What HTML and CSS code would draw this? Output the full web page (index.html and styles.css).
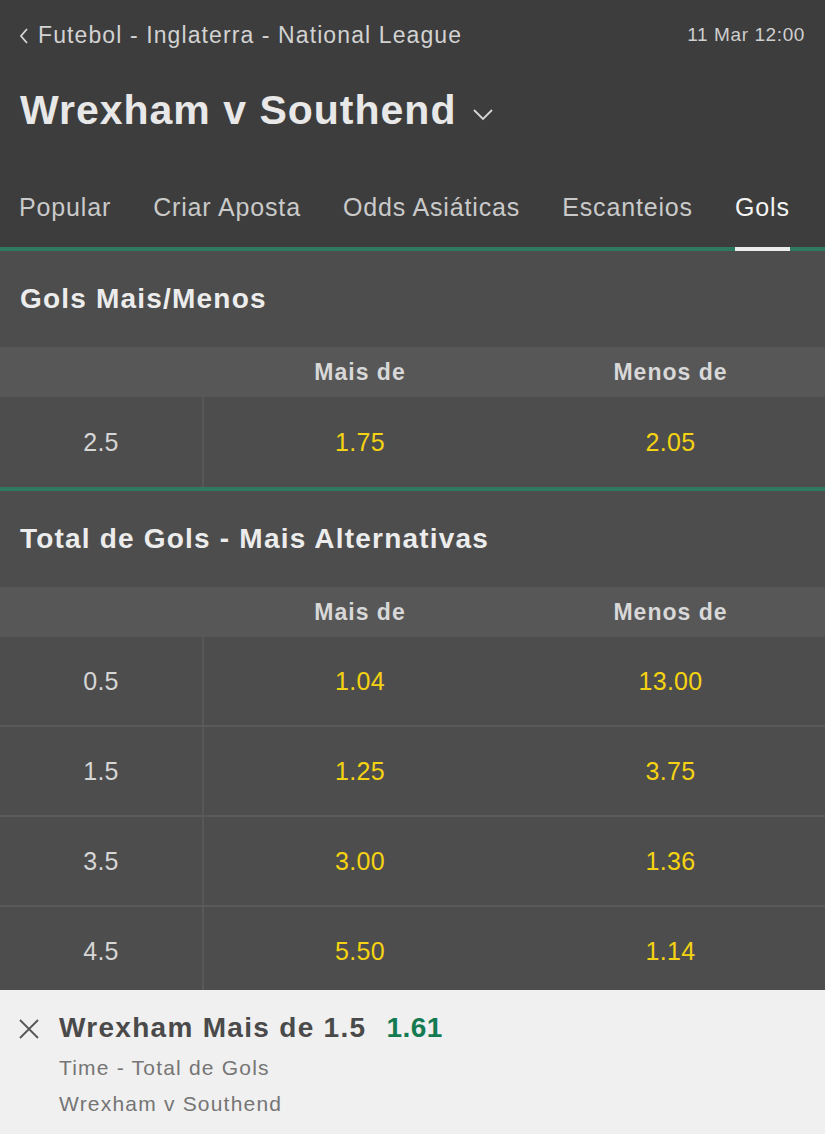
FILE: index.html
```html
<!DOCTYPE html>
<html lang="pt">
<head>
<meta charset="utf-8">
<link rel="stylesheet" href="styles.css">
</head>
<body>
<div class="page">
  <header class="top">
    <div class="crumbs">
      <div class="crumb">
        <svg class="back" width="12" height="20" viewBox="0 0 12 20"><path d="M9 3 L3 10 L9 17" fill="none" stroke="#d6d6d6" stroke-width="1.8"/></svg>
        <span>Futebol - Inglaterra - National League</span>
      </div>
      <div class="date">11 Mar 12:00</div>
    </div>
    <div class="title-row">
      <h1 class="title">Wrexham v Southend</h1>
      <svg class="chev" width="22" height="14" viewBox="0 0 22 14"><path d="M2 3 L11 12 L20 3" fill="none" stroke="#d6d6d6" stroke-width="1.8"/></svg>
    </div>
    <nav class="tabs">
      <span class="tab">Popular</span>
      <span class="tab">Criar Aposta</span>
      <span class="tab">Odds Asiáticas</span>
      <span class="tab">Escanteios</span>
      <span class="tab active">Gols</span>
    </nav>
  </header>

  <section class="market">
    <h2 class="market-title">Gols Mais/Menos</h2>
    <div class="grid">
      <div class="hrow"><span></span><span>Mais de</span><span>Menos de</span></div>
      <div class="row"><span class="line">2.5</span><span class="odd">1.75</span><span class="odd">2.05</span></div>
    </div>
  </section>

  <section class="market">
    <h2 class="market-title">Total de Gols - Mais Alternativas</h2>
    <div class="grid">
      <div class="hrow"><span></span><span>Mais de</span><span>Menos de</span></div>
      <div class="row"><span class="line">0.5</span><span class="odd">1.04</span><span class="odd">13.00</span></div>
      <div class="row"><span class="line">1.5</span><span class="odd">1.25</span><span class="odd">3.75</span></div>
      <div class="row"><span class="line">3.5</span><span class="odd">3.00</span><span class="odd">1.36</span></div>
      <div class="row last"><span class="line">4.5</span><span class="odd">5.50</span><span class="odd">1.14</span></div>
    </div>
  </section>

  <footer class="slip">
    <svg class="close" width="22" height="22" viewBox="0 0 22 22"><path d="M2 2 L20 20 M20 2 L2 20" stroke="#555" stroke-width="1.8"/></svg>
    <div class="slip-body">
      <div class="slip-head"><span class="sel">Wrexham Mais de 1.5</span><span class="price">1.61</span></div>
      <div class="slip-sub">Time - Total de Gols</div>
      <div class="slip-sub">Wrexham v Southend</div>
    </div>
  </footer>
</div>
</body>
</html>
```

FILE: styles.css
```css
* { box-sizing: border-box; margin: 0; padding: 0; }
html, body { width: 825px; height: 1134px; overflow: hidden; }
body { font-family: "Liberation Sans", Arial, sans-serif; background: #4d4d4d; }
.page { display: flex; flex-direction: column; height: 1134px; }

.top { background: #3d3d3d; border-bottom: 4px solid #2e7a60; }
.crumbs { display: flex; justify-content: space-between; align-items: center; height: 70px; padding: 0 20px 0 18px; }
.crumb { display: flex; align-items: center; gap: 8px; color: #d2d2d2; font-size: 23px; letter-spacing: 1.1px; }
.back { margin-top: 1px; }
.date { color: #cfcfcf; font-size: 19px; letter-spacing: 0.6px; }
.title-row { display: flex; align-items: center; gap: 16px; height: 80px; padding-left: 20px; }
.title { color: #e8e8e8; font-size: 41px; font-weight: bold; letter-spacing: 1px; }
.chev { margin-top: 8px; }
.tabs { display: flex; height: 97px; padding-left: 19px; gap: 42px; align-items: stretch; }
.tab { color: #cacaca; font-size: 25px; letter-spacing: 0.85px; display: flex; align-items: center; padding-top: 17px; position: relative; }
.tab.active { color: #f4f4f4; }
.tab.active::after { content: ""; position: absolute; left: 0; right: 0; bottom: -4px; height: 4px; background: #ececec; }

.market { background: #4d4d4d; border-bottom: 4px solid #2e7a60; }
.market:last-of-type { border-bottom: 0; flex: 1; }
.market-title { height: 96px; display: flex; align-items: center; padding-left: 20px; color: #ececec; font-size: 28px; font-weight: bold; letter-spacing: 1.2px; }
.grid { display: flex; flex-direction: column; }
.hrow, .row { display: grid; grid-template-columns: 204px 312px 1fr; }
.hrow { height: 50px; background: #575757; }
.hrow span { display: flex; align-items: center; justify-content: center; color: #d8d8d8; font-size: 23px; font-weight: bold; letter-spacing: 1px; }
.row { height: 90px; border-bottom: 2px solid #5a5a5a; }
.row.last { border-bottom: 0; height: 83px; }
.row.last span { padding-top: 6px; }
.market:first-of-type .row { border-bottom: 0; }
.row span { display: flex; align-items: center; justify-content: center; font-size: 25px; letter-spacing: 0.3px; }
.row .line { color: #d6d6d6; border-right: 2px solid #585858; }
.row .odd { color: #f5d312; }

.slip { background: #f0f0f0; height: 144px; display: flex; gap: 19px; padding: 22px 0 0 18px; }
.close { margin-top: 6px; flex: none; }
.slip-head { display: flex; align-items: baseline; gap: 20px; height: 38px; }
.sel { color: #4a4a4a; font-size: 28px; font-weight: bold; letter-spacing: 1.3px; }
.price { color: #147a52; font-size: 28px; font-weight: bold; letter-spacing: 0.5px; }
.slip-sub { color: #757575; font-size: 21px; letter-spacing: 1.2px; height: 36px; display: flex; align-items: center; }
```
